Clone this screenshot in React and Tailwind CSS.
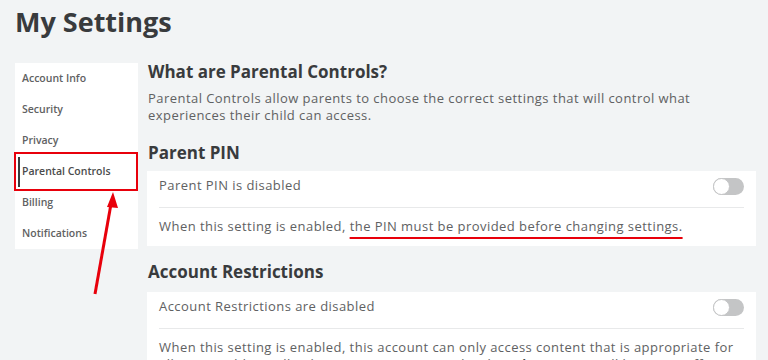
const menu = ['Account Info', 'Security', 'Privacy', 'Parental Controls', 'Billing', 'Notifications']

function Toggle() {
  return (
    <div className="w-[31px] h-[17px] rounded-full bg-[#c4c5c6] flex items-center flex-shrink-0">
      <div className="w-[17px] h-[17px] rounded-full bg-white border border-[#c4c5c6]" />
    </div>
  )
}

function SettingCard({ label, children }) {
  return (
    <div className="bg-white px-[12px]">
      <div className="border-b border-[#e8e9ea] pb-[6px]">
        <div className="flex items-center justify-between h-[30px]">
          <span>{label}</span>
          <Toggle />
        </div>
      </div>
      <p className="pt-[10px] pb-[11px] leading-[17px]">{children}</p>
    </div>
  )
}

export default function App() {
  return (
    <div
      className="relative w-[768px] h-[360px] overflow-hidden bg-[#f2f4f5] text-[#606162]"
      style={{ fontFamily: '"Open Sans", "Liberation Sans", sans-serif' }}
    >
      <div className="h-[63px] pl-[15px] pt-[5px]">
        <h1 className="text-[27px] leading-[34px] font-bold text-[#393b3d]">My Settings</h1>
      </div>

      <div className="flex">
        <nav className="ml-[15px] w-[123px] h-[186px] bg-white flex-shrink-0">
          {menu.map((item) => (
            <div key={item} className="h-[31px] flex items-center">
              {item === 'Parental Controls' ? (
                <div className="ml-[3px] pl-[2px] h-[30px] flex items-center border-l-2 border-[#393b3d] text-[10.5px] font-semibold text-[#4a4b4c]">
                  {item}
                </div>
              ) : (
                <span className="pl-[7px] text-[10.5px] font-semibold">{item}</span>
              )}
            </div>
          ))}
        </nav>

        <main className="ml-[9px] mr-[12px] flex-1 text-[13px] tracking-[0.45px]">
          <h2 className="text-[17px] leading-[18px] font-bold tracking-normal text-[#393b3d] pl-[1px]">What are Parental Controls?</h2>
          <p className="mt-[9px] leading-[17px] pl-[1px]">
            Parental Controls allow parents to choose the correct settings that will control what experiences their child can access.
          </p>

          <h2 className="mt-[20px] text-[17px] leading-[18px] font-bold tracking-normal text-[#393b3d] pl-[1px]">Parent PIN</h2>
          <div className="mt-[9px]">
            <SettingCard label="Parent PIN is disabled">
              When this setting is enabled,{' '}
              <span className="underline decoration-[#e8000b] decoration-2 underline-offset-[6px]">
                the PIN must be provided before changing settings.
              </span>
            </SettingCard>
          </div>

          <h2 className="mt-[17px] text-[17px] leading-[18px] font-bold tracking-normal text-[#393b3d] pl-[1px]">Account Restrictions</h2>
          <div className="mt-[11px]">
            <SettingCard label="Account Restrictions are disabled">
              When this setting is enabled, this account can only access content that is appropriate for all users. Additionally, the Contact Settings under the <b className="text-[#393b3d]">Privacy</b> page will be set to Off.
            </SettingCard>
          </div>
        </main>
      </div>

      {/* annotation overlays */}
      <div className="absolute left-[14px] top-[152px] w-[124px] h-[39px] border-2 border-[#e8000b]" />
      <svg className="absolute inset-0 pointer-events-none" width="768" height="360" viewBox="0 0 768 360">
        <line x1="95" y1="294" x2="111" y2="204" stroke="#e8000b" strokeWidth="3" />
        <polygon points="113,192 107,207 118,208" fill="#e8000b" />
      </svg>
    </div>
  )
}
